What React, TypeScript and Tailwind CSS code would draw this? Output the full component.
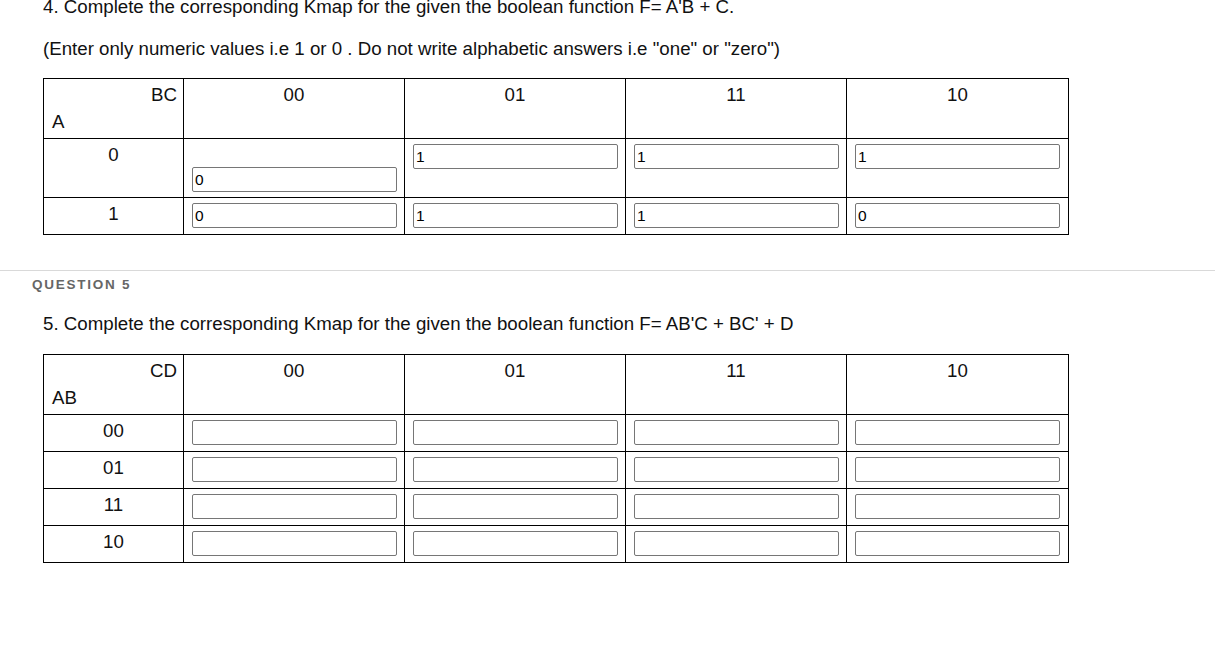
import React from "react";

type Cell = string;

const cols = ["00", "01", "11", "10"];

const KInput = ({ value }: { value: Cell }) => (
    <input
        type="text"
        defaultValue={value}
        className="block w-[205px] h-[25px] border border-[#767676] rounded-[2px] px-[2px] text-[15.5px] text-black bg-white font-['Liberation_Sans',Arial,sans-serif] outline-none"
    />
);

const KMap = ({
    colVar,
    rowVar,
    rows,
    values,
    tallFirstRow = false,
}: {
    colVar: string;
    rowVar: string;
    rows: string[];
    values: Cell[][];
    tallFirstRow?: boolean;
}) => {
    return (
        <div className="grid grid-cols-[140px_221px_221px_221px_222px] w-[1026px] border-l border-t border-black text-[18.7px] leading-[21.5px] text-[#111]">
            {/* header */}
            <div className="h-[60px] border-r border-b border-black pt-[5px] pl-[8px] pr-[6px]">
                <div className="text-right">{colVar}</div>
                <div className="mt-[5px]">{rowVar}</div>
            </div>
            {cols.map((c) => (
                <div key={c} className="h-[60px] border-r border-b border-black pt-[5px] text-center">
                    {c}
                </div>
            ))}

            {rows.map((r, ri) => {
                const tall = tallFirstRow && ri === 0;
                const h = tall ? "h-[59px]" : "h-[37px]";
                return (
                    <React.Fragment key={r}>
                        <div className={`${h} border-r border-b border-black pt-[5px] text-center`}>{r}</div>
                        {values[ri].map((v, ci) => (
                            <div key={ci} className={`${h} border-r border-b border-black pt-[5px] pl-[8px]`}>
                                {tall && ci === 0 && <div className="h-[23px]"></div>}
                                <KInput value={v} />
                            </div>
                        ))}
                    </React.Fragment>
                );
            })}
        </div>
    );
};

const App = () => {
    const q4Values = [
        ["0", "1", "1", "1"],
        ["0", "1", "1", "0"],
    ];
    const q5Values = [
        ["", "", "", ""],
        ["", "", "", ""],
        ["", "", "", ""],
        ["", "", "", ""],
    ];

    return (
        <div className="w-[1215px] h-[648px] overflow-hidden bg-white font-['Liberation_Sans',Arial,sans-serif] text-[#111]">
            {/* question 4 */}
            <div className="pl-[43px]">
                <p className="-mt-[4px] text-[18.7px] leading-[21.5px]">
                    4. Complete the corresponding Kmap for the given the boolean function F= A'B + C.
                </p>
                <p className="mt-[20px] text-[18.7px] leading-[21.5px]">
                    (Enter only numeric values i.e 1 or 0 . Do not write alphabetic answers i.e "one" or "zero")
                </p>
                <div className="mt-[19px]">
                    <KMap colVar="BC" rowVar="A" rows={["0", "1"]} values={q4Values} tallFirstRow />
                </div>
            </div>

            <div className="mt-[35px] border-t border-[#d9d9d9]"></div>

            {/* question 5 */}
            <div className="mt-[6px] pl-[32px] text-[13.5px] leading-[15.5px] font-bold tracking-[0.13em] text-[#666]">
                QUESTION 5
            </div>
            <div className="pl-[43px]">
                <p className="mt-[20px] text-[18.7px] leading-[21.5px]">
                    5. Complete the corresponding Kmap for the given the boolean function F= AB'C + BC' + D
                </p>
                <div className="mt-[20px]">
                    <KMap colVar="CD" rowVar="AB" rows={["00", "01", "11", "10"]} values={q5Values} />
                </div>
            </div>
        </div>
    );
};

export default App;
